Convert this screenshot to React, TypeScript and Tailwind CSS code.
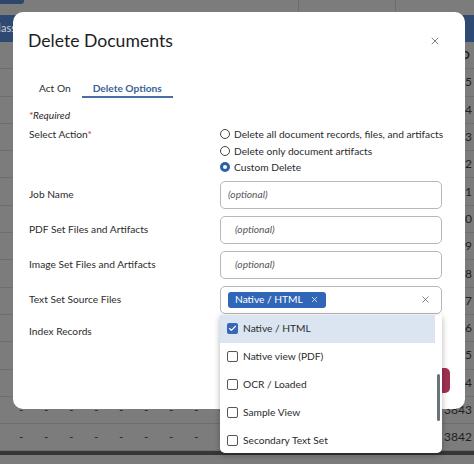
import { Check, X } from "lucide-react";

const font = { fontFamily: "Lato, 'Noto Sans', sans-serif" };

const bgRows = ["3856", "3855", "3854", "3853", "3852", "3851", "3850", "3849", "3848", "3847", "3846", "3845", "3844", "3843", "3842"];

function Backdrop() {
  return (
    <div className="flex h-[464px] w-[474px] flex-col bg-[#7c7c7c] text-[#1f1f1f]">
      <div className="flex h-[15px] shrink-0 items-start">
        <div className="h-[4px] w-[24px] rounded-br-[3px] bg-[#2e476d]" />
        <div className="ml-[274px] h-full w-px bg-[#6c6c6c]" />
        <div className="ml-[96px] h-full w-px bg-[#6c6c6c]" />
      </div>
      <div className="flex h-[27px] shrink-0 items-center overflow-hidden bg-[#2e4a72] text-[11px] text-[#c9d2de]">
        <span className="-ml-[9px]">Class</span>
      </div>
      {bgRows.map((n, r) => (
        <div key={n} className="flex h-[27.3px] shrink-0 items-center border-b border-[#6e6e6e] pr-[4px] text-[12px]">
          <div className="flex flex-1 gap-[19px] overflow-hidden pl-[19px] text-[#2a2a2a]">
            {r >= 13 && Array.from({ length: 9 }).map((_, i) => <span key={i} className="w-[6px]">-</span>)}
          </div>
          <span className={"w-[26px] text-right " + (r === 0 ? "font-bold" : "")}>{r === 0 ? "ID" : n}</span>
        </div>
      ))}
      <div className="h-[4px] shrink-0 bg-[#343638]" />
    </div>
  );
}

function Radio({ label, checked }: { label: string; checked?: boolean }) {
  return (
    <div className="flex h-[16.5px] items-center gap-[4px]">
      {checked ? (
        <span className="h-[10px] w-[10px] rounded-full border-[3px] border-[#2f5fa8]" />
      ) : (
        <span className="h-[10px] w-[10px] rounded-full border border-[#444]" />
      )}
      <span className="leading-[16px]">{label}</span>
    </div>
  );
}

function Field({ label, short, children }: { label: string; short?: boolean; children?: React.ReactNode }) {
  return (
    <div className={"flex items-center " + (short ? "h-[22px]" : "")}>
      <div className="w-[191px] shrink-0">{label}</div>
      <div className="w-[222px] shrink-0">{children}</div>
    </div>
  );
}

function TextInput({ indent }: { indent?: boolean }) {
  return (
    <div
      className={
        "flex h-[28px] items-center rounded-[5px] border border-[#b8b8b8] italic text-[#555] " +
        (indent ? "pl-[14px]" : "pl-[7px]")
      }
    >
      (optional)
    </div>
  );
}

const options = ["Native / HTML", "Native view (PDF)", "OCR / Loaded", "Sample View", "Secondary Text Set"];

function Dropdown() {
  return (
    <div className="absolute left-0 top-[29px] z-10 h-[138px] w-[222px] overflow-hidden rounded-b-[5px] bg-white shadow-[0_2px_6px_rgba(0,0,0,0.3)]">
      <div className="w-[215px]">
        {options.map((o, i) => (
          <div key={o} className={"flex h-[28px] items-center gap-[5px] pl-[7px] " + (i === 0 ? "bg-[#dbe5f1]" : "")}>
            {i === 0 ? (
              <span className="flex h-[11px] w-[11px] items-center justify-center rounded-[2px] bg-[#3768b8]">
                <Check size={9} strokeWidth={3} color="white" />
              </span>
            ) : (
              <span className="h-[11px] w-[11px] rounded-[2px] border border-[#555]" />
            )}
            <span>{o}</span>
          </div>
        ))}
      </div>
      <div className="absolute right-[2px] top-[59px] h-[47px] w-[3px] rounded-full bg-[#6b737c]" />
    </div>
  );
}

function Modal() {
  return (
    <div
      className="absolute left-[13px] top-[12px] flex h-[397px] w-[452px] flex-col rounded-[10px] bg-white text-[10.2px] text-[#2b2b2b]"
      style={font}
    >
      <div className="flex items-center justify-between pl-[15px] pr-[24px] pt-[17px]">
        <h1 className="text-[17.6px] leading-[24px] text-[#1e1e1e]">Delete Documents</h1>
        <X size={12} strokeWidth={1.5} color="#555" />
      </div>
      <div className="mt-[27px] flex pl-[15px]">
        <div className="h-[18px] px-[11px] leading-[16px]">Act On</div>
        <div className="h-[18px] border-b-2 border-[#4a6fa8] px-[11px] font-bold leading-[16px] text-[#3c5f99]">
          Delete Options
        </div>
      </div>
      <div className="flex flex-col pl-[16px]">
        <div className="mt-[10px] italic leading-[14px]">
          <span className="text-[#c0392b]">*</span>Required
        </div>
        <div className="mt-[4px] flex items-start">
          <div className="w-[191px] shrink-0 leading-[16px]">
            Select Action<span className="text-[#c0392b]">*</span>
          </div>
          <div className="flex flex-col">
            <Radio label="Delete all document records, files, and artifacts" />
            <Radio label="Delete only document artifacts" />
            <Radio label="Custom Delete" checked />
          </div>
        </div>
        <div className="mt-[5px] flex flex-col gap-[7px]">
          <Field label="Job Name">
            <TextInput />
          </Field>
          <Field label="PDF Set Files and Artifacts">
            <TextInput indent />
          </Field>
          <Field label="Image Set Files and Artifacts">
            <TextInput indent />
          </Field>
          <Field label="Text Set Source Files">
            <div className="relative">
              <div className="flex h-[28px] items-center justify-between rounded-[5px] border border-[#b8b8b8] pl-[7px] pr-[10px]">
                <span className="flex h-[16px] items-center gap-[7px] rounded-[3px] bg-[#2f66b8] px-[7px] text-white">
                  Native / HTML
                  <X size={9} strokeWidth={2} />
                </span>
                <X size={11} strokeWidth={1.5} color="#555" />
              </div>
              <Dropdown />
            </div>
          </Field>
          <Field label="Index Records" short />
        </div>
      </div>
      <div className="mt-auto mb-[16px] flex justify-end gap-[8px] pr-[15px]">
        <div className="flex h-[25px] items-center rounded-[5px] border border-[#2f66b8] px-[12px] text-[#2f66b8]">Cancel</div>
        <div className="flex h-[25px] items-center rounded-[5px] bg-[#a1304f] px-[12px] text-white">Delete</div>
      </div>
    </div>
  );
}

export default function App() {
  return (
    <div className="relative h-[464px] w-[474px] overflow-hidden" style={font}>
      <Backdrop />
      <Modal />
    </div>
  );
}
